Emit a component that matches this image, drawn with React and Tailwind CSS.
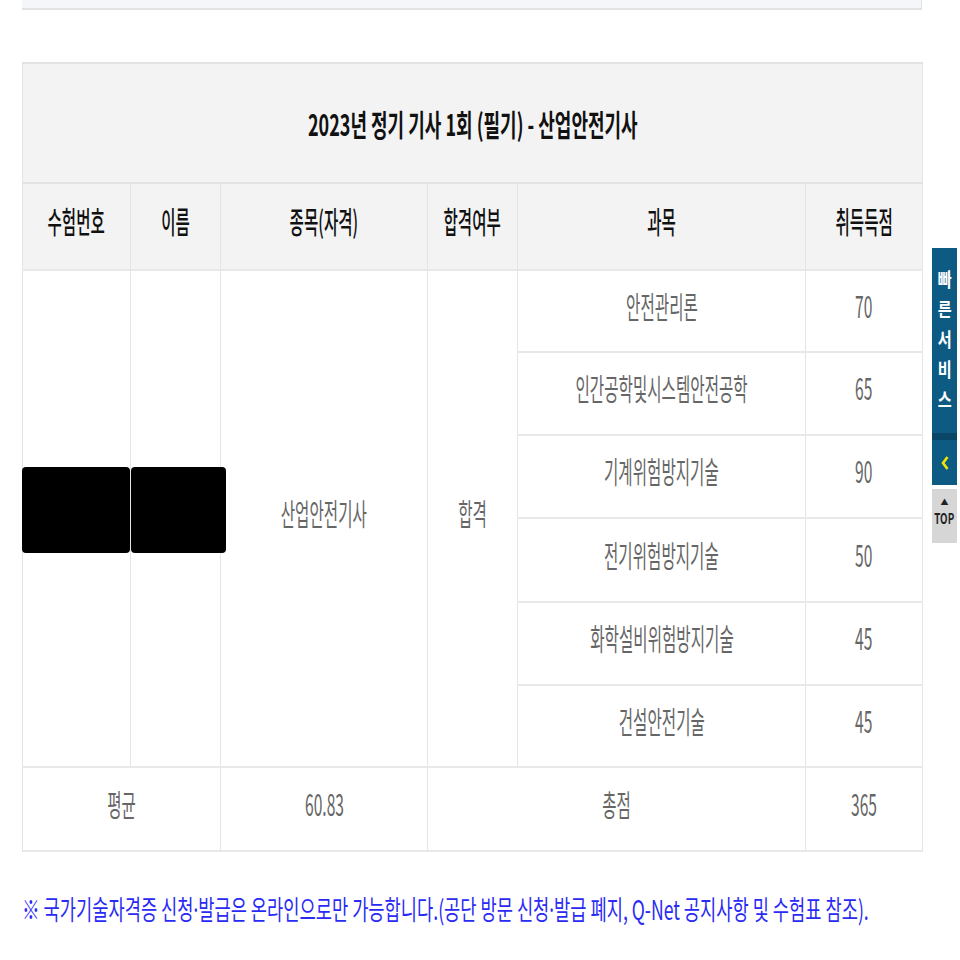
import React from 'react';

const font = { fontFamily: '"Noto Sans CJK KR", "Noto Sans", sans-serif' };

// the screenshot text is narrow and tall, so squeeze it horizontally
const Sq = ({ children, className = 'scale-x-[0.52]' }) => (
  <div className="flex justify-center">
    <span className={`inline-block shrink-0 whitespace-nowrap ${className}`}>{children}</span>
  </div>
);

const Dot = () => <span className="font-['Noto_Sans',sans-serif]">·</span>;

const subjects = [
  { name: '안전관리론', score: 70, h: 'h-[82px]' },
  { name: '인간공학및시스템안전공학', score: 65, h: 'h-[83px]' },
  { name: '기계위험방지기술', score: 90, h: 'h-[83px]' },
  { name: '전기위험방지기술', score: 50, h: 'h-[84px]' },
  { name: '화학설비위험방지기술', score: 45, h: 'h-[83px]' },
  { name: '건설안전기술', score: 45, h: 'h-[82px]' },
];

const QuickBar = () => (
  <div className="absolute left-[932px] top-[248px] w-[25px] flex flex-col">
    <div className="bg-[#0d5a83] h-[185px] flex flex-col items-center pt-[20px] gap-[8px] text-white text-[19px] font-bold leading-[22px]">
      {'빠른서비스'.split('').map((c, i) => (
        <span key={i} className="inline-block scale-x-[0.8]">{c}</span>
      ))}
    </div>
    <div className="h-[7px] bg-[#0a4668]" />
    <div className="bg-[#0d5a83] h-[45px] flex items-center justify-center">
      <svg width="10" height="16" viewBox="0 0 10 16">
        <path d="M7.5 2 L3 8 L7.5 14" fill="none" stroke="#f2e600" strokeWidth="2.6" />
      </svg>
    </div>
    <div className="h-[4px]" />
    <div className="bg-[#d6d6d6] h-[54px] flex flex-col items-center pt-[9px] text-[#222] leading-none">
      <span className="text-[8px]">▲</span>
      <span className="text-[15px] font-bold mt-[4px] inline-block scale-x-[0.65]">TOP</span>
    </div>
  </div>
);

export default function App() {
  const cell = 'border-l border-[#e4e4e4] text-center align-middle pb-[12px]';
  return (
    <div className="relative w-[960px] h-[960px] bg-white overflow-hidden" style={font}>
      {/* end of the previous panel */}
      <div className="ml-[22px] w-[900px] h-[10px] bg-[#f5f6fa] border-b-2 border-r border-[#e2e2e2]" />

      <div className="relative ml-[22px] mt-[52px] w-[900px]">
        <table className="w-[900px] border-collapse table-fixed border-r border-[#e4e4e4]">
          <colgroup>
            <col className="w-[108px]" />
            <col className="w-[90px]" />
            <col className="w-[207px]" />
            <col className="w-[90px]" />
            <col className="w-[288px]" />
            <col className="w-[117px]" />
          </colgroup>
          <tbody>
            <tr className="h-[120px] bg-[#f3f3f3] border-t-2 border-[#e2e2e2]">
              <td colSpan={6} className="border-l border-[#e4e4e4] text-center align-middle text-[30px] font-bold text-[#111]">
                <Sq className="scale-x-[0.6]">2023년 정기 기사 1회 (필기) - 산업안전기사</Sq>
              </td>
            </tr>
            <tr className="h-[87px] bg-[#f3f3f3] border-t-2 border-[#e2e2e2] text-[30px] font-medium text-[#111]">
              <td className={cell}><Sq>수험번호</Sq></td>
              <td className={cell}><Sq>이름</Sq></td>
              <td className={cell}><Sq>종목(자격)</Sq></td>
              <td className={cell}><Sq>합격여부</Sq></td>
              <td className={cell}><Sq>과목</Sq></td>
              <td className={cell}><Sq>취득득점</Sq></td>
            </tr>
            {subjects.map((s, i) => (
              <tr key={s.name} className={`${s.h} border-t-2 border-[#e8e8e8] text-[30px] text-[#666]`}>
                {i === 0 && (
                  <>
                    <td rowSpan={6} className={cell} />
                    <td rowSpan={6} className={cell} />
                    <td rowSpan={6} className={cell}><Sq>산업안전기사</Sq></td>
                    <td rowSpan={6} className={cell}><Sq>합격</Sq></td>
                  </>
                )}
                <td className={cell}><Sq>{s.name}</Sq></td>
                <td className={cell}><Sq>{s.score}</Sq></td>
              </tr>
            ))}
            <tr className="h-[84px] border-t-2 border-b-2 border-[#e8e8e8] text-[30px] text-[#666]">
              <td colSpan={2} className={cell}><Sq>평균</Sq></td>
              <td className={cell}><Sq>60.83</Sq></td>
              <td colSpan={2} className={cell}><Sq>총점</Sq></td>
              <td className={cell}><Sq>365</Sq></td>
            </tr>
          </tbody>
        </table>

        {/* redacted cells */}
        <div className="absolute left-0 top-[405px] w-[108px] h-[86px] bg-black rounded-[4px]" />
        <div className="absolute left-[109px] top-[405px] w-[95px] h-[86px] bg-black rounded-[4px]" />
      </div>

      <p className="ml-[22px] mt-[43px] text-[27px] text-[#2a2af5] leading-none">
        <span className="inline-block whitespace-nowrap origin-left scale-x-[0.653]">
          ※ 국가기술자격증 신청<Dot />발급은 온라인으로만 가능합니다.(공단 방문 신청<Dot />발급 폐지, Q-Net 공지사항 및 수험표 참조).
        </span>
      </p>

      <QuickBar />
    </div>
  );
}
